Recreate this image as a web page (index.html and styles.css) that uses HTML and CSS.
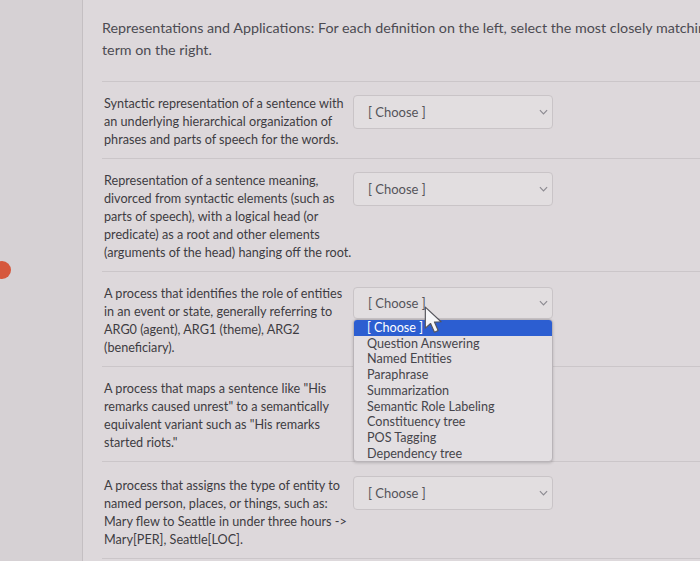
FILE: index.html
```html
<!DOCTYPE html>
<html lang="en">
<head>
<meta charset="utf-8">
<title>Representations and Applications</title>
<link rel="stylesheet" href="styles.css">
</head>
<body>
<div class="page">
  <aside class="sidebar"><span class="dot"></span></aside>
  <main class="main">
    <p class="title">Representations and Applications: For each definition on the left, select the most closely matching<br>term on the right.</p>

    <div class="row">
      <div class="def">Syntactic representation of a sentence with<br>an underlying hierarchical organization of<br>phrases and parts of speech for the words.</div>
      <div class="select"><span>[ Choose ]</span><svg class="chev" viewBox="0 0 10 6"><path d="M1 1 L5 5 L9 1" /></svg></div>
    </div>

    <div class="row">
      <div class="def">Representation of a sentence meaning,<br>divorced from syntactic elements (such as<br>parts of speech), with a logical head (or<br>predicate) as a root and other elements<br>(arguments of the head) hanging off the root.</div>
      <div class="select"><span>[ Choose ]</span><svg class="chev" viewBox="0 0 10 6"><path d="M1 1 L5 5 L9 1" /></svg></div>
    </div>

    <div class="row">
      <div class="def">A process that identifies the role of entities<br>in an event or state, generally referring to<br>ARG0 (agent), ARG1 (theme), ARG2<br>(beneficiary).</div>
      <div class="select open"><span>[ Choose ]</span><svg class="chev" viewBox="0 0 10 6"><path d="M1 1 L5 5 L9 1" /></svg>
        <ul class="menu">
          <li class="active">[ Choose ]</li>
          <li>Question Answering</li>
          <li>Named Entities</li>
          <li>Paraphrase</li>
          <li>Summarization</li>
          <li>Semantic Role Labeling</li>
          <li>Constituency tree</li>
          <li>POS Tagging</li>
          <li>Dependency tree</li>
        </ul>
        <svg class="cursor" viewBox="0 0 16 24"><path d="M1 1 L1 19 L5.5 15 L8.8 22.5 L12 21 L8.8 13.8 L14.5 13.5 Z" /></svg>
      </div>
    </div>

    <div class="row">
      <div class="def">A process that maps a sentence like "His<br>remarks caused unrest" to a semantically<br>equivalent variant such as "His remarks<br>started riots."</div>
    </div>

    <div class="row last">
      <div class="def">A process that assigns the type of entity to<br>named person, places, or things, such as:<br>Mary flew to Seattle in under three hours -&gt;<br>Mary[PER], Seattle[LOC].</div>
      <div class="select"><span>[ Choose ]</span><svg class="chev" viewBox="0 0 10 6"><path d="M1 1 L5 5 L9 1" /></svg></div>
    </div>
  </main>
</div>
</body>
</html>
```

FILE: styles.css
```css
html, body {
  margin: 0;
  padding: 0;
}
body {
  width: 700px;
  height: 561px;
  overflow: hidden;
  background: #ddd8db;
  font-family: Lato, "Open Sans", sans-serif;
}
.page {
  display: flex;
  height: 561px;
}
.sidebar {
  position: relative;
  width: 82px;
  flex: none;
  background: #d6d1d4;
  border-right: 1px solid #c4bfc2;
}
.dot {
  position: absolute;
  left: -7px;
  top: 261px;
  width: 18px;
  height: 18px;
  border-radius: 50%;
  background: #d6583d;
}
.main {
  flex: none;
  width: 640px;
  padding-left: 19px;
  padding-top: 17px;
}
.title {
  margin: 0 0 20px 0;
  font-size: 14.3px;
  line-height: 22px;
  color: #4c4b52;
  white-space: nowrap;
}
.row {
  display: flex;
  align-items: flex-start;
  border-top: 1px solid #cbc6c9;
  padding: 13px 0 9px 2px;
}
.row.last {
  padding-top: 15px;
  border-bottom: 1px solid #cbc6c9;
}
.def {
  width: 249px;
  flex: none;
  font-size: 12.65px;
  line-height: 18px;
  color: #3d3c42;
  white-space: nowrap;
}
.select {
  position: relative;
  display: flex;
  align-items: center;
  justify-content: space-between;
  box-sizing: border-box;
  width: 200px;
  height: 34px;
  padding: 0 4px 0 14px;
  border: 1px solid #c9c4c7;
  border-radius: 4px;
  background: #e2dee0;
  font-size: 13px;
  color: #55545a;
}
.row.last .select {
  margin-top: -1px;
}
.select.open {
  margin-top: 2px;
  height: 32px;
}
.chev {
  width: 9px;
  height: 6px;
  fill: none;
  stroke: #8d8b92;
  stroke-width: 1.3;
}
.menu {
  position: absolute;
  left: -1px;
  top: 31px;
  width: 200px;
  box-sizing: border-box;
  margin: 0;
  padding: 0;
  list-style: none;
  background: #e3dfe2;
  border: 1px solid #b9b4b8;
  border-radius: 4px;
  box-shadow: 0 1px 3px rgba(0, 0, 0, 0.18);
  font-size: 12.6px;
  line-height: 15.7px;
  color: #46454b;
  z-index: 2;
}
.menu li {
  padding-left: 13px;
}
.menu li.active {
  background: #2c5ed1;
  color: #ffffff;
  border-radius: 3px 3px 0 0;
}
.cursor {
  position: absolute;
  left: 70px;
  top: 18px;
  width: 19px;
  height: 28px;
  fill: #f6f6f8;
  stroke: #55555c;
  stroke-width: 1;
  stroke-linejoin: round;
  z-index: 3;
}
```
